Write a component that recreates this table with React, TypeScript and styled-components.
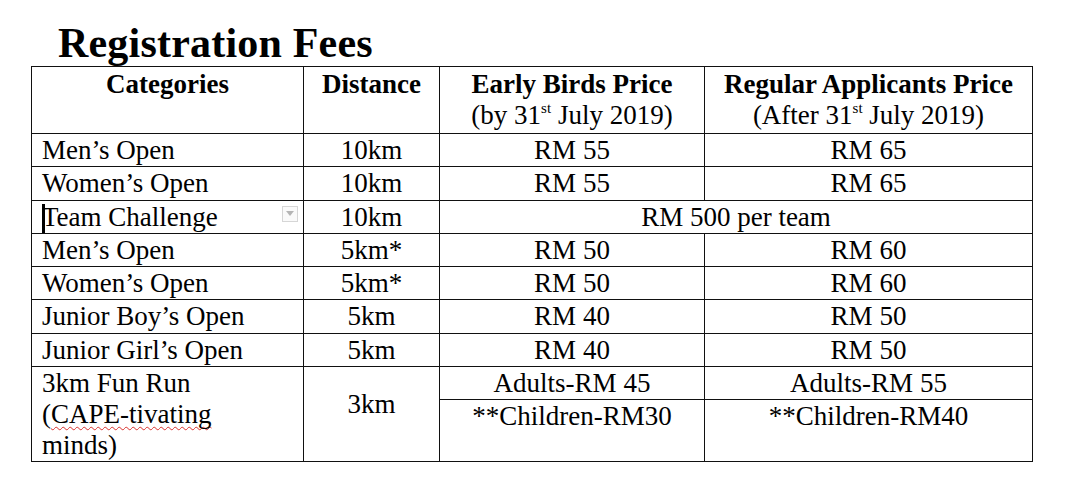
import React from "react";
import styled, { createGlobalStyle } from "styled-components";

const Global = createGlobalStyle`
  html, body { margin: 0; padding: 0; background: #ffffff; }
  body { font-family: "Liberation Serif", "Times New Roman", serif; color: #000; }
`;

const Page = styled.div`
  width: 1080px;
  height: 489px;
  padding-top: 22px;
  box-sizing: border-box;
  overflow: hidden;
`;

const Title = styled.h1`
  margin: 0 0 2px 58px;
  font-size: 42px;
  line-height: 42px;
  font-weight: bold;
  letter-spacing: 0.2px;
`;

const Table = styled.table`
  margin-left: 31px;
  width: 1001px;
  border-collapse: collapse;
  table-layout: fixed;
  font-size: 27px;
  line-height: 31px;
`;

const Row = styled.tr<{ $h: number }>`
  height: ${(p) => p.$h}px;
`;

const Cell = styled.td<{ $align?: "left" | "center"; $padTop?: number }>`
  border: 1.5px solid #111;
  padding: ${(p) => p.$padTop ?? 1}px 0 0 ${(p) => (p.$align === "left" ? 10 : 0)}px;
  text-align: ${(p) => p.$align ?? "center"};
  vertical-align: top;
  white-space: nowrap;
  position: relative;
`;

const Head = styled.th`
  border: 1.5px solid #111;
  padding: 2px 0 0 0;
  text-align: center;
  vertical-align: top;
  font-weight: bold;
  white-space: nowrap;
`;

const Sub = styled.span`
  display: block;
  font-weight: normal;
`;

const Sup = styled.sup`
  font-size: 15px;
  line-height: 0;
  vertical-align: 11px;
`;

const Cursor = styled.span`
  position: absolute;
  left: 10px;
  top: 3px;
  width: 3px;
  height: 29px;
  background: #000;
`;

const DropBox = styled.span`
  position: absolute;
  right: 5px;
  top: 5px;
  width: 14px;
  height: 14px;
  border: 1px solid #d6d6d6;
  background: #fafafa;
  display: flex;
  align-items: center;
  justify-content: center;
`;

const Misspelled = styled.span`
  text-decoration: underline wavy #d9302c;
  text-decoration-thickness: 1px;
  text-underline-offset: 3px;
  text-decoration-skip-ink: none;
`;

const Col = styled.col<{ $w: number }>`
  width: ${(p) => p.$w}px;
`;

type R = { cat: string; dist: string; early: string; regular: string };

const rows: R[] = [
  { cat: "Men’s Open", dist: "10km", early: "RM 55", regular: "RM 65" },
  { cat: "Women’s Open", dist: "10km", early: "RM 55", regular: "RM 65" },
];
const rows2: R[] = [
  { cat: "Men’s Open", dist: "5km*", early: "RM 50", regular: "RM 60" },
  { cat: "Women’s Open", dist: "5km*", early: "RM 50", regular: "RM 60" },
  { cat: "Junior Boy’s Open", dist: "5km", early: "RM 40", regular: "RM 50" },
  { cat: "Junior Girl’s Open", dist: "5km", early: "RM 40", regular: "RM 50" },
];

const BodyRow = ({ r }: { r: R }) => (
  <Row $h={33.3}>
    <Cell $align="left">{r.cat}</Cell>
    <Cell>{r.dist}</Cell>
    <Cell>{r.early}</Cell>
    <Cell>{r.regular}</Cell>
  </Row>
);

export default function App() {
  return (
    <Page>
      <Global />
      <Title>Registration Fees</Title>
      <Table>
        <colgroup>
          <Col $w={272} />
          <Col $w={136} />
          <Col $w={265} />
          <Col $w={328} />
        </colgroup>
        <tbody>
          <Row $h={67}>
            <Head>Categories</Head>
            <Head>Distance</Head>
            <Head>
              Early Birds Price
              <Sub>
                (by 31<Sup>st</Sup> July 2019)
              </Sub>
            </Head>
            <Head>
              Regular Applicants Price
              <Sub>
                (After 31<Sup>st</Sup> July 2019)
              </Sub>
            </Head>
          </Row>
          {rows.map((r, i) => (
            <BodyRow key={"a" + i} r={r} />
          ))}
          <Row $h={33.3}>
            <Cell $align="left">
              <Cursor />
              Team Challenge
              <DropBox>
                <svg width="8" height="5" viewBox="0 0 8 5">
                  <path d="M0 0 L8 0 L4 5 Z" fill="#b5b5b5" />
                </svg>
              </DropBox>
            </Cell>
            <Cell>10km</Cell>
            <Cell colSpan={2}>RM 500 per team</Cell>
          </Row>
          {rows2.map((r, i) => (
            <BodyRow key={"b" + i} r={r} />
          ))}
          <Row $h={33}>
            <Cell $align="left" rowSpan={2}>
              3km Fun Run
              <br />
              (<Misspelled>CAPE-tivating</Misspelled>
              <br />
              minds)
            </Cell>
            <Cell rowSpan={2} $padTop={22}>
              3km
            </Cell>
            <Cell>Adults-RM 45</Cell>
            <Cell>Adults-RM 55</Cell>
          </Row>
          <Row $h={62}>
            <Cell>**Children-RM30</Cell>
            <Cell>**Children-RM40</Cell>
          </Row>
        </tbody>
      </Table>
    </Page>
  );
}
